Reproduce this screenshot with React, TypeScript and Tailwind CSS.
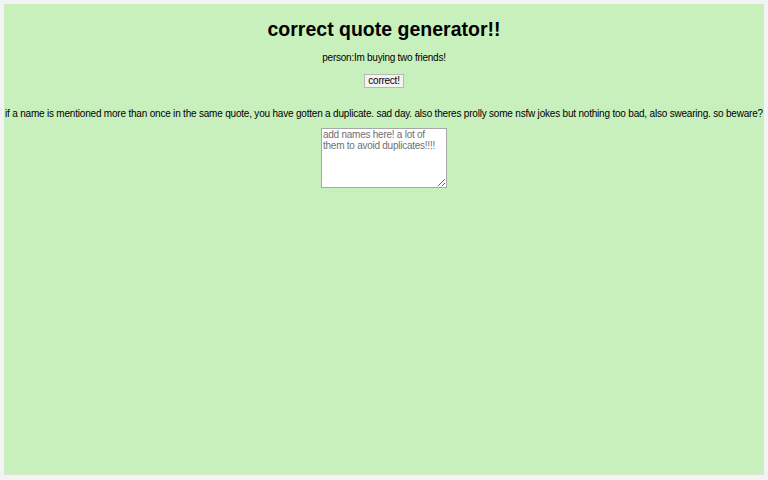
export default function App() {
  return (
    <div className="h-[480px] w-[768px] bg-[#f3f3f3] p-[4px] font-['Liberation_Sans',Arial,sans-serif] text-black">
      <div className="flex h-[471px] flex-col items-center border-b border-[#d8e8d4] bg-[#c8f0bd] text-center">
        <h1 className="mt-[13px] text-[19.5px] font-bold leading-[24px]">correct quote generator!!</h1>
        <p className="mt-[11px] text-[10px] leading-[12px] tracking-[-0.25px]">person:Im buying two friends!</p>
        <button className="mt-[10px] border border-[#b8b8b8] bg-[#f4f4f4] px-[3px] text-[10px] leading-[12px] tracking-[-0.25px]">
          correct!
        </button>
        <p className="mt-[20px] text-[10px] leading-[12px] whitespace-nowrap tracking-[-0.2px]">
          if a name is mentioned more than once in the same quote, you have gotten a duplicate. sad day. also theres prolly some nsfw jokes but nothing too bad, also swearing. so beware?
        </p>
        <textarea
          className="mt-[8px] h-[60px] w-[126px] resize border border-[#a8a8a8] bg-white px-[1px] text-[10px] leading-[11px] tracking-[-0.25px] placeholder:text-[#707070]"
          placeholder="add names here! a lot of them to avoid duplicates!!!!"
        />
      </div>
    </div>
  );
}
